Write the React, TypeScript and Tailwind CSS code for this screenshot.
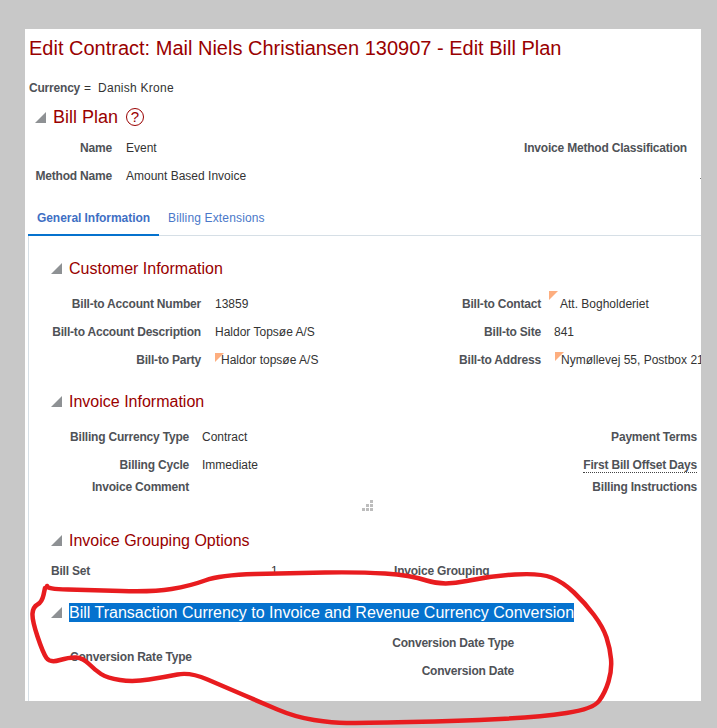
import type { ReactNode } from "react";

// hand-drawn circle around the last section, traced off the screenshot
const scribble: [number, number][] = [
  [47, 586], [46, 589], [90, 590], [153, 592], [190, 586], [220, 575], [290, 573], [360, 572],
  [410, 575], [443, 586], [490, 576], [540, 573], [563, 582], [585, 603], [603, 627],
  [610, 648], [612, 670], [605, 693], [593, 709], [540, 717], [460, 721], [360, 723],
  [333, 723], [295, 717], [260, 702], [225, 687], [190, 672], [165, 677], [133, 682],
  [107, 678], [95, 670], [83, 658], [70, 657], [50, 663], [43, 653], [32, 620],
  [33, 607], [42, 602], [45, 588],
];

function smoothPath(points: [number, number][]) {
  let d = `M${points[0][0]} ${points[0][1]}`;
  for (let i = 1; i < points.length - 1; i++) {
    const [x, y] = points[i];
    const [nx, ny] = points[i + 1];
    d += ` Q${x} ${y} ${(x + nx) / 2} ${(y + ny) / 2}`;
  }
  const last = points[points.length - 1];
  return `${d} L${last[0]} ${last[1]}`;
}

function Disclosure() {
  return (
    <svg width="11" height="11" viewBox="0 0 11 11" className="shrink-0">
      <polygon points="11,0 11,11 0,11" fill="#8e9194" />
    </svg>
  );
}

function Flag({ className }: { className: string }) {
  return (
    <svg width="9" height="9" viewBox="0 0 9 9" className={`absolute left-0 ${className}`}>
      <polygon points="0,0 9,0 0,9" fill="#fdae7f" />
    </svg>
  );
}

function SectionHead({ children }: { children: ReactNode }) {
  return (
    <div className="flex h-[20px] items-center gap-[7px] pl-[22px]">
      <Disclosure />
      <h3 className="text-[16px] leading-[19px] text-[#990000]">{children}</h3>
    </div>
  );
}

function Label({ className = "", children }: { className?: string; children: ReactNode }) {
  return (
    <span className={`shrink-0 text-right font-bold tracking-[-0.2px] text-[#4f5257] ${className}`}>
      {children}
    </span>
  );
}

function Grip() {
  const dots = [[8, 0], [4, 4], [8, 4], [0, 8], [4, 8], [8, 8]];
  return (
    <svg width="11" height="11" viewBox="0 0 11 11">
      {dots.map(([x, y]) => (
        <rect key={`${x}-${y}`} x={x} y={y} width="3" height="3" fill="#bdbdbd" />
      ))}
    </svg>
  );
}

export default function App() {
  return (
    <div className="relative h-[728px] w-[717px] overflow-hidden bg-[#c8c8c8] pl-[25px] pt-[29px] font-['Liberation_Sans',Arial,sans-serif] text-[12px] text-[#333]">
      <div className="h-[672px] w-[676px] overflow-hidden whitespace-nowrap bg-white">
        <h1 className="pl-[4px] pt-[7px] text-[20px] leading-[24px] text-[#990000]">
          Edit Contract: Mail Niels Christiansen 130907 - Edit Bill Plan
        </h1>

        <div className="mt-[20px] flex h-[16px] items-center pl-[4px]">
          <span className="font-bold tracking-[-0.2px] text-[#4f5257]">Currency</span>
          <span className="ml-[4px]">=</span>
          <span className="ml-[7px] tracking-[0.25px]">Danish Krone</span>
        </div>

        <div className="mt-[9px] flex h-[24px] items-center pl-[10px]">
          <Disclosure />
          <h2 className="ml-[7px] text-[18px] text-[#990000]">Bill Plan</h2>
          <span className="ml-[8px] flex h-[18px] w-[18px] items-center justify-center rounded-full border border-[#990000] text-[15px] text-[#990000]">
            ?
          </span>
        </div>

        <div className="mt-[5px] flex h-[28px] items-center">
          <Label className="w-[87px]">Name</Label>
          <span className="ml-[14px]">Event</span>
          <Label className="ml-auto mr-[14px]">Invoice Method Classification</Label>
        </div>
        <div className="flex h-[28px] items-center">
          <Label className="w-[87px]">Method Name</Label>
          <span className="ml-[14px]">Amount Based Invoice</span>
          <span className="ml-auto mt-[5px] h-px w-px bg-[#777]" />
        </div>

        <div className="mt-[12px] flex h-[34px]">
          <div className="ml-[3px] flex w-[131px] justify-center border-b-[2px] border-[#0572ce] pt-[7px]">
            <span className="font-bold tracking-[-0.05px] text-[#3f6fc4]">General Information</span>
          </div>
          <div className="flex-1 border-b border-[#d6dfe6] pl-[9px] pt-[7px] text-[#4a78c9]">
            <span className="tracking-[0.15px]">Billing Extensions</span>
          </div>
        </div>

        <div className="ml-[3px] h-[465px] border-l border-[#d6dfe6]">
          <div className="h-[22px]" />
          <SectionHead>Customer Information</SectionHead>

          <div className="mt-[12px] pl-[22px]">
            <div className="flex h-[28px] items-center">
              <Label className="w-[150px]">Bill-to Account Number</Label>
              <span className="ml-[14px] w-[190px] shrink-0">13859</span>
              <Label className="w-[136px]">Bill-to Contact</Label>
              <span className="relative ml-[8px] shrink-0 pl-[11px]">
                <Flag className="-top-[4px]" />
                Att. Bogholderiet
              </span>
            </div>
            <div className="flex h-[28px] items-center">
              <Label className="w-[150px]">Bill-to Account Description</Label>
              <span className="ml-[14px] w-[190px] shrink-0">Haldor Topsøe A/S</span>
              <Label className="w-[136px]">Bill-to Site</Label>
              <span className="ml-[13px] shrink-0">841</span>
            </div>
            <div className="flex h-[28px] items-center">
              <Label className="w-[150px]">Bill-to Party</Label>
              <span className="relative ml-[14px] w-[190px] shrink-0 pl-[6px]">
                <Flag className="top-[2px]" />
                Haldor topsøe A/S
              </span>
              <Label className="w-[136px]">Bill-to Address</Label>
              <span className="relative ml-[14px] shrink-0 pl-[6px]">
                <Flag className="top-[1px]" />
                Nymøllevej 55, Postbox 21
              </span>
            </div>
          </div>

          <div className="mt-[17px]">
            <SectionHead>Invoice Information</SectionHead>
          </div>

          <div className="mt-[12px] pl-[22px]">
            <div className="flex h-[28px] items-center">
              <Label className="w-[138px]">Billing Currency Type</Label>
              <span className="ml-[13px]">Contract</span>
              <Label className="ml-auto mr-[4px]">Payment Terms</Label>
            </div>
            <div className="flex h-[28px] items-center">
              <Label className="w-[138px]">Billing Cycle</Label>
              <span className="ml-[13px]">Immediate</span>
              <Label className="ml-auto mr-[4px] border-b border-dotted border-[#444] pt-px leading-[14px]">
                First Bill Offset Days
              </Label>
            </div>
            <div className="flex h-[16px] items-center">
              <Label className="w-[138px]">Invoice Comment</Label>
              <Label className="ml-auto mr-[4px]">Billing Instructions</Label>
            </div>
          </div>

          <div className="mt-[5px] flex h-[11px] pl-[333px]">
            <Grip />
          </div>

          <div className="mt-[19px]">
            <SectionHead>Invoice Grouping Options</SectionHead>
          </div>

          <div className="mt-[7px] flex h-[28px] items-center pl-[22px]">
            <Label className="w-[220px] !text-left">Bill Set</Label>
            <span className="w-[123px]">1</span>
            <Label>Invoice Grouping</Label>
          </div>

          <div className="mt-[17px]">
            <SectionHead>
              <span className="block bg-[#0572ce] text-white">
                Bill Transaction Currency to Invoice and Revenue Currency Conversion
              </span>
            </SectionHead>
          </div>

          <div className="mt-[7px] flex h-[56px] items-center pl-[41px]">
            <Label className="w-[122px] !text-left">Conversion Rate Type</Label>
            <div className="ml-[122px]">
              <div className="flex h-[28px] items-center justify-end">
                <Label className="w-[200px]">Conversion Date Type</Label>
              </div>
              <div className="flex h-[28px] items-center justify-end">
                <Label className="w-[200px]">Conversion Date</Label>
              </div>
            </div>
          </div>
        </div>
      </div>

      <svg width="717" height="728" className="pointer-events-none absolute left-0 top-0">
        <path
          d={smoothPath(scribble)}
          fill="none"
          stroke="#e81c1f"
          strokeWidth="4.5"
          strokeLinecap="round"
          strokeLinejoin="round"
        />
      </svg>
    </div>
  );
}
